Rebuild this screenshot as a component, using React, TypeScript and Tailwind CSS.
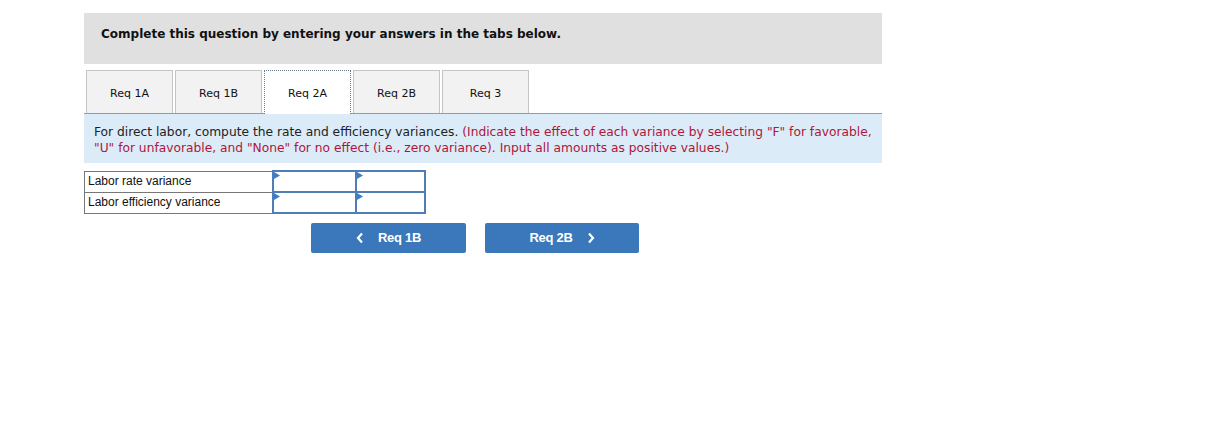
import React from 'react';

const tabs = ['Req 1A', 'Req 1B', 'Req 2A', 'Req 2B', 'Req 3'];

const rows = ['Labor rate variance', 'Labor efficiency variance'];

const Flag = () => (
  <svg className="absolute left-0 top-0" width="6" height="7" viewBox="0 0 6 7">
    <path d="M0 0 L6 3.5 L0 7 Z" fill="#3d7cc9" />
  </svg>
);

const InputCell = ({ width }: { width: string }) => (
  <td className={`relative border-2 border-[#4f7db8] p-0 h-[21px] ${width}`}>
    <Flag />
  </td>
);

export default function App() {
  return (
    <div className="bg-white min-h-[424px] pl-[84px] pt-[13px]">
      <div className="w-[798px]">
        {/* prompt header */}
        <div className="bg-[#e0e0e0] h-[51px] px-[17px] pt-[13px] font-['DejaVu_Sans',Verdana,sans-serif] text-[12px] leading-[16px] font-bold text-[#111]">
          Complete this question by entering your answers in the tabs below.
        </div>

        {/* tab strip */}
        <div className="mt-[6px] flex gap-[2px] pl-[2px] border-b border-[#9a9a9a]">
          {tabs.map((t) => {
            const active = t === 'Req 2A';
            return (
              <div
                key={t}
                className={
                  active
                    ? "w-[87px] h-[44px] -mb-px pt-[3px] flex items-center justify-center bg-white border border-dotted border-[#6a7a8c] border-b-0 font-['DejaVu_Sans',Verdana,sans-serif] text-[11px] text-[#111]"
                    : "w-[87px] h-[43px] pt-[5px] flex items-center justify-center bg-[#f2f2f2] border border-[#c4c4c4] border-b-0 font-['DejaVu_Sans',Verdana,sans-serif] text-[11px] text-[#111]"
                }
              >
                {t}
              </div>
            );
          })}
        </div>

        {/* instructions */}
        <div className="bg-[#dcebf8] h-[49px] pl-[10px] pr-[10px] pt-[10px] font-['DejaVu_Sans',Verdana,sans-serif] text-[12.25px] leading-[16px] text-[#222]">
          For direct labor, compute the rate and efficiency variances.{' '}
          <span className="text-[#b0163a]">
            (Indicate the effect of each variance by selecting "F" for favorable, "U" for unfavorable, and "None" for no effect (i.e., zero variance). Input all amounts as positive values.)
          </span>
        </div>

        {/* answer grid */}
        <table className="mt-[7px] border-collapse font-['Liberation_Sans',Arial,sans-serif] text-[12px] text-[#111]">
          <tbody>
            {rows.map((r) => (
              <tr key={r}>
                <td className="w-[188px] h-[21px] border border-[#777] px-[3px] py-0 leading-[19px]">{r}</td>
                <InputCell width="w-[83px]" />
                <InputCell width="w-[69px]" />
              </tr>
            ))}
          </tbody>
        </table>

        {/* nav buttons */}
        <div className="mt-[9px] ml-[227px] flex gap-[19px] font-['Liberation_Sans',Arial,sans-serif] text-[13px] font-bold text-white">
          <button className="w-[155px] h-[30px] rounded-[2px] bg-[#3a77bb] flex items-center justify-center gap-[14px] tracking-[-0.3px]">
            <svg width="8" height="12" viewBox="0 0 8 12">
              <path d="M6 1.5 L2 6 L6 10.5" fill="none" stroke="white" strokeWidth="2.2" />
            </svg>
            <span>Req 1B</span>
          </button>
          <button className="w-[154px] h-[30px] rounded-[2px] bg-[#3a77bb] flex items-center justify-center gap-[14px] tracking-[-0.3px]">
            <span>Req 2B</span>
            <svg width="8" height="12" viewBox="0 0 8 12">
              <path d="M2 1.5 L6 6 L2 10.5" fill="none" stroke="white" strokeWidth="2.2" />
            </svg>
          </button>
        </div>
      </div>
    </div>
  );
}
